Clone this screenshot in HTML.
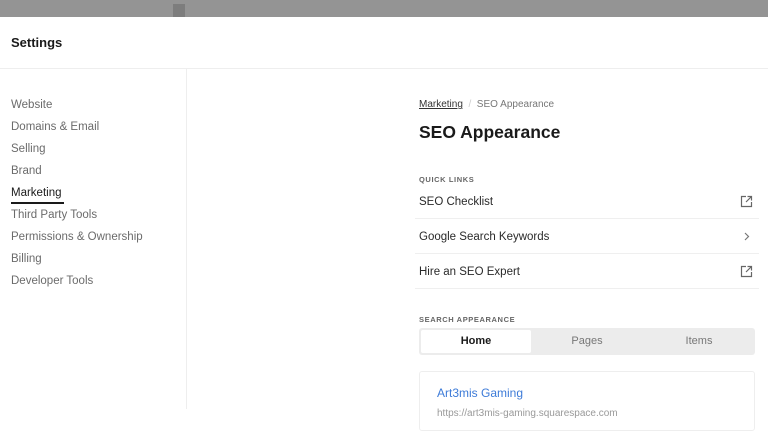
<!DOCTYPE html>
<html><head><meta charset="utf-8"><style>
*{margin:0;padding:0;box-sizing:border-box}
body{width:768px;height:408px;overflow:hidden;background:#fff;font-family:"Liberation Sans",sans-serif;position:relative;color:#1a1a1a}
.top{position:absolute;left:0;top:0;width:768px;height:17px;background:#949494}
.knob{position:absolute;left:173px;top:4px;width:12px;height:13px;background:#7d7d7d}
.hdr{position:absolute;left:11px;top:35px;font-size:13px;font-weight:bold;color:#1a1a1a}
.hline{position:absolute;left:0;top:68px;width:768px;height:1px;background:#eee}
.vline{position:absolute;left:186px;top:69px;width:1px;height:340px;background:#eee}
.nav{position:absolute;left:11px;font-size:11.5px;color:#6b6b6b}
.nav.act{color:#1a1a1a}
.ul{position:absolute;left:11px;top:202px;width:53px;height:2px;background:#1a1a1a}
.c{position:absolute;left:419px}
.bc{top:99px;font-size:10px;color:#777}
.bc u{color:#333}
h1{position:absolute;left:419px;top:122px;font-size:17.5px;font-weight:bold;color:#1a1a1a}
.lab{font-size:7.5px;letter-spacing:.6px;color:#666;font-weight:bold}
.row{position:absolute;left:415px;width:344px;height:35px;border-bottom:1px solid #efefef;font-size:11.5px;color:#2a2a2a;padding-left:4px;line-height:36px}
.ic{position:absolute;right:6px;top:11px}
.tabs{position:absolute;left:419px;top:328px;width:336px;height:27px;background:#ececec;border-radius:3px}
.tab{position:absolute;top:0;height:27px;line-height:27px;text-align:center;font-size:11px;color:#777}
.card{position:absolute;left:419px;top:371px;width:336px;height:60px;border:1px solid #eee;border-radius:3px}
</style></head><body>
<div class="top"><div class="knob"></div></div>
<div class="hdr">Settings</div>
<div class="hline"></div>
<div class="vline"></div>
<div class="nav" style="top:99px">Website</div>
<div class="nav" style="top:121px">Domains &amp; Email</div>
<div class="nav" style="top:143px">Selling</div>
<div class="nav" style="top:165px">Brand</div>
<div class="nav act" style="top:187px">Marketing</div>
<div class="ul"></div>
<div class="nav" style="top:209px">Third Party Tools</div>
<div class="nav" style="top:231px">Permissions &amp; Ownership</div>
<div class="nav" style="top:253px">Billing</div>
<div class="nav" style="top:275px">Developer Tools</div>

<div class="c bc"><u>Marketing</u> <span style="color:#ccc">&nbsp;/&nbsp;</span> SEO Appearance</div>
<h1>SEO Appearance</h1>
<div class="c lab" style="top:175px">QUICK LINKS</div>
<div class="row" style="top:184px">SEO Checklist<svg class="ic" width="13" height="13" viewBox="0 0 13 13" fill="none" stroke="#666" stroke-width="1.2"><path d="M6 1.5H1.5v10h10V7"/><path d="M7.5 1.5h4v4M11.5 1.5L6 7"/></svg></div>
<div class="row" style="top:219px">Google Search Keywords<svg class="ic" width="13" height="13" viewBox="0 0 13 13" fill="none" stroke="#777" stroke-width="1.2"><path d="M5 3l3.5 3.5L5 10"/></svg></div>
<div class="row" style="top:254px">Hire an SEO Expert<svg class="ic" width="13" height="13" viewBox="0 0 13 13" fill="none" stroke="#666" stroke-width="1.2"><path d="M6 1.5H1.5v10h10V7"/><path d="M7.5 1.5h4v4M11.5 1.5L6 7"/></svg></div>
<div class="c lab" style="top:315px">SEARCH APPEARANCE</div>
<div class="tabs">
<div class="tab" style="left:2px;top:2px;width:110px;height:23px;line-height:23px;background:#fff;border-radius:2px;color:#1a1a1a;font-weight:bold">Home</div>
<div class="tab" style="left:112px;width:112px">Pages</div>
<div class="tab" style="left:224px;width:112px">Items</div>
</div>
<div class="card"><div style="position:absolute;left:17px;top:14px;font-size:12px;color:#3d7bd8">Art3mis Gaming</div><div style="position:absolute;left:17px;top:36px;font-size:10px;color:#999">https://art3mis-gaming.squarespace.com</div></div>
</body></html>
